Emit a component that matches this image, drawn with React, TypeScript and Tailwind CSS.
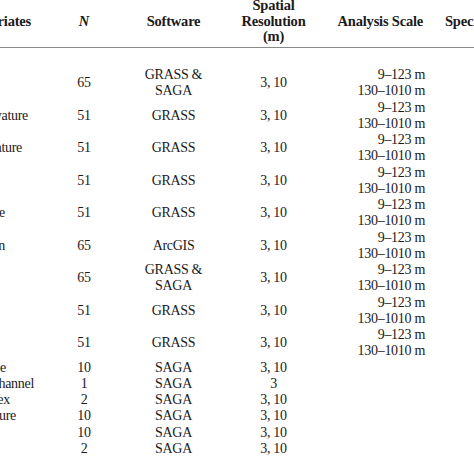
const rows = [
  { left: "", pad: "mr-[60px]", n: "65", sw: ["GRASS &", "SAGA"], res: "3, 10", scale: true },
  { left: "Profile Curvature", pad: "mr-[32px]", n: "51", sw: ["GRASS"], res: "3, 10", scale: true },
  { left: "Plan Curvature", pad: "mr-[38px]", n: "51", sw: ["GRASS"], res: "3, 10", scale: true },
  { left: "", pad: "mr-[60px]", n: "51", sw: ["GRASS"], res: "3, 10", scale: true },
  { left: "Slope", pad: "mr-[55px]", n: "51", sw: ["GRASS"], res: "3, 10", scale: true },
  { left: "Flow Direction", pad: "mr-[55px]", n: "65", sw: ["ArcGIS"], res: "3, 10", scale: true },
  { left: "", pad: "mr-[60px]", n: "65", sw: ["GRASS &", "SAGA"], res: "3, 10", scale: true },
  { left: "", pad: "mr-[60px]", n: "51", sw: ["GRASS"], res: "3, 10", scale: true },
  { left: "", pad: "mr-[60px]", n: "51", sw: ["GRASS"], res: "3, 10", scale: true },
];

const compact = [
  { left: "Valley Slope", pad: "mr-[54px]", n: "10", res: "3, 10" },
  { left: "Distance to Channel", pad: "mr-[26px]", n: "1", res: "3" },
  { left: "Convergence Index", pad: "mr-[50px]", n: "2", res: "3, 10" },
  { left: "Total Curvature", pad: "mr-[44px]", n: "10", res: "3, 10" },
  { left: "", pad: "mr-[60px]", n: "10", res: "3, 10" },
  { left: "", pad: "mr-[60px]", n: "2", res: "3, 10" },
];

function LeftCell({ text, pad }: { text: string; pad: string }) {
  return (
    <div className="w-[60px] shrink-0 flex justify-end whitespace-nowrap">
      <span className={pad}>{text}</span>
    </div>
  );
}

export default function App() {
  return (
    <div
      className="w-[474px] h-[474px] overflow-hidden bg-white text-[#1c1a1b] text-[14px] tracking-[-0.3px]"
      style={{ fontFamily: '"Liberation Serif", "Times New Roman", serif' }}
    >
      {/* header */}
      <div className="flex items-center font-bold text-[14.5px] tracking-[-0.2px] leading-[15.5px] -mt-[2px] h-[46.5px] whitespace-nowrap">
        <div className="w-[60px] shrink-0 flex justify-end">
          <span className="mr-[29px]">Covariates</span>
        </div>
        <div className="w-[48px] shrink-0 text-center italic">N</div>
        <div className="w-[131px] shrink-0 text-center">Software</div>
        <div className="w-[69px] shrink-0 text-center">
          <div>Spatial</div>
          <div>Resolution</div>
          <div>(m)</div>
        </div>
        <div className="w-[117px] shrink-0 text-right pr-[2px]">Analysis Scale</div>
        <div className="pl-[20px]">Specifications</div>
      </div>
      <div className="mt-[2.5px] h-px bg-[#8a8a8a]" />

      {/* body */}
      <div className="pt-[19px] leading-[16.25px] whitespace-nowrap">
        {rows.map((r, i) => (
          <div key={i} className="flex items-center h-[32.5px]">
            <LeftCell text={r.left} pad={r.pad} />
            <div className="w-[48px] shrink-0 text-center">{r.n}</div>
            <div className="w-[131px] shrink-0 text-center">
              {r.sw.map((s) => (
                <div key={s}>{s}</div>
              ))}
            </div>
            <div className="w-[69px] shrink-0 text-center">{r.res}</div>
            <div className="w-[117px] shrink-0 text-right">
              {r.scale && (
                <>
                  <div>9–123 m</div>
                  <div>130–1010 m</div>
                </>
              )}
            </div>
          </div>
        ))}
        {compact.map((r, i) => (
          <div key={i} className="flex items-center h-[16.25px]">
            <LeftCell text={r.left} pad={r.pad} />
            <div className="w-[48px] shrink-0 text-center">{r.n}</div>
            <div className="w-[131px] shrink-0 text-center">SAGA</div>
            <div className="w-[69px] shrink-0 text-center">{r.res}</div>
          </div>
        ))}
      </div>
    </div>
  );
}
